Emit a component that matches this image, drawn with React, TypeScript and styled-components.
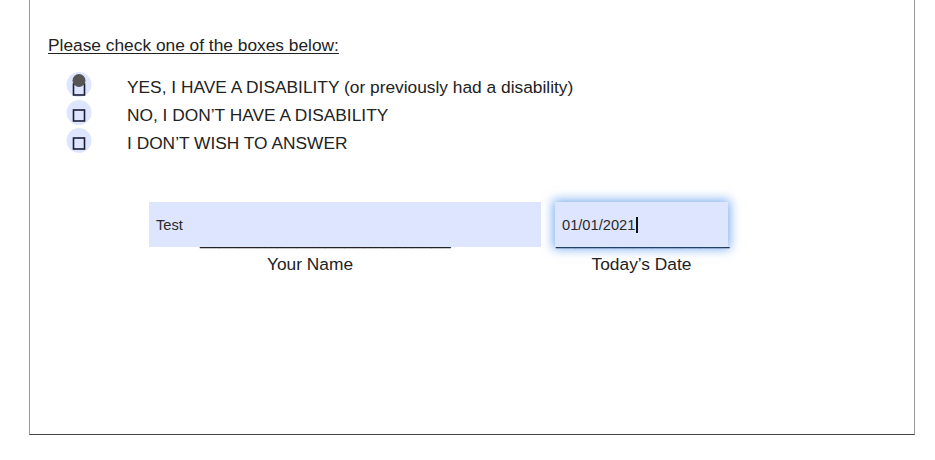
import React from "react";
import styled, { createGlobalStyle } from "styled-components";

const Global = createGlobalStyle`
  html, body { margin: 0; padding: 0; background: #ffffff; }
  body { font-family: "Liberation Sans", Arial, sans-serif; color: #222222; }
`;

const Page = styled.div`
  margin-left: 29px;
  box-sizing: border-box;
  width: 886px;
  height: 435px;
  border-left: 1px solid #9a9a9a;
  border-right: 1px solid #9a9a9a;
  border-bottom: 1px solid #444444;
  padding: 35px 0 0 18px;
`;

const Heading = styled.div`
  font-size: 13pt;
  line-height: 20px;
  text-decoration: underline;
  text-underline-offset: 2px;
  text-decoration-thickness: 1px;
`;

const Options = styled.div`
  margin-top: 18px;
  display: flex;
  flex-direction: column;
  padding-left: 18px;
`;

const Option = styled.div`
  display: flex;
  align-items: flex-start;
  height: 28px;
  gap: 35px;
  font-size: 13pt;
  line-height: 28px;
`;

const BoxIcon = styled.svg`
  flex: none;
  display: block;
  overflow: visible;
`;

const Fields = styled.div`
  margin-top: 45px;
  padding-left: 101px;
  display: flex;
  gap: 14px;
`;

const Column = styled.div<{ $w: number }>`
  width: ${(p) => p.$w}px;
  display: flex;
  flex-direction: column;
`;

const Field = styled.div<{ $focused?: boolean }>`
  position: relative;
  z-index: 1;
  height: 45px;
  background: rgb(222, 229, 255);
  display: flex;
  align-items: center;
  padding-left: 7px;
  font-size: 11pt;
  color: #2a2a2a;
  box-shadow: ${(p) =>
    p.$focused ? "0 0 10px 2px rgba(40, 120, 230, 0.6)" : "none"};
`;

const Caret = styled.span`
  display: inline-block;
  width: 2px;
  height: 16px;
  background: #111;
  margin-left: 1px;
`;

const Rule = styled.div<{ $offset: number }>`
  margin-top: -10px;
  height: 4px;
  padding-left: ${(p) => p.$offset}px;
  font-size: 13pt;
  line-height: 4px;
  white-space: nowrap;
  color: #222;
`;

const Label = styled.div<{ $offset?: number }>`
  margin-top: 13px;
  padding-left: ${(p) => p.$offset ?? 0}px;
  text-align: ${(p) => (p.$offset == null ? "center" : "left")};
  font-size: 13pt;
  line-height: 20px;
`;

function CheckBox({ checked }: { checked?: boolean }) {
  return (
    <BoxIcon width="26" height="28" viewBox="0 0 26 28">
      <circle cx="13" cy="11.5" r="12.5" fill="rgb(222, 229, 255)" />
      <rect
        x="7.5"
        y={checked ? 11 : 9}
        width="11"
        height="11"
        fill="none"
        stroke="#1c1d38"
        strokeWidth="1.6"
      />
      {checked && <circle cx="13" cy="7.5" r="6.5" fill="#555555" />}
    </BoxIcon>
  );
}

export default function App() {
  return (
    <>
      <Global />
      <Page>
        <Heading>Please check one of the boxes below:</Heading>
        <Options>
          <Option>
            <CheckBox checked />
            <span>YES, I HAVE A DISABILITY (or previously had a disability)</span>
          </Option>
          <Option>
            <CheckBox />
            <span>NO, I DON’T HAVE A DISABILITY</span>
          </Option>
          <Option>
            <CheckBox />
            <span>I DON’T WISH TO ANSWER</span>
          </Option>
        </Options>
        <Fields>
          <Column $w={392}>
            <Field>Test</Field>
            <Rule $offset={51}>{"_".repeat(26)}</Rule>
            <Label $offset={118}>Your Name</Label>
          </Column>
          <Column $w={173}>
            <Field $focused>
              01/01/2021
              <Caret />
            </Field>
            <Rule $offset={1}>{"_".repeat(18)}</Rule>
            <Label>Today’s Date</Label>
          </Column>
        </Fields>
      </Page>
    </>
  );
}
